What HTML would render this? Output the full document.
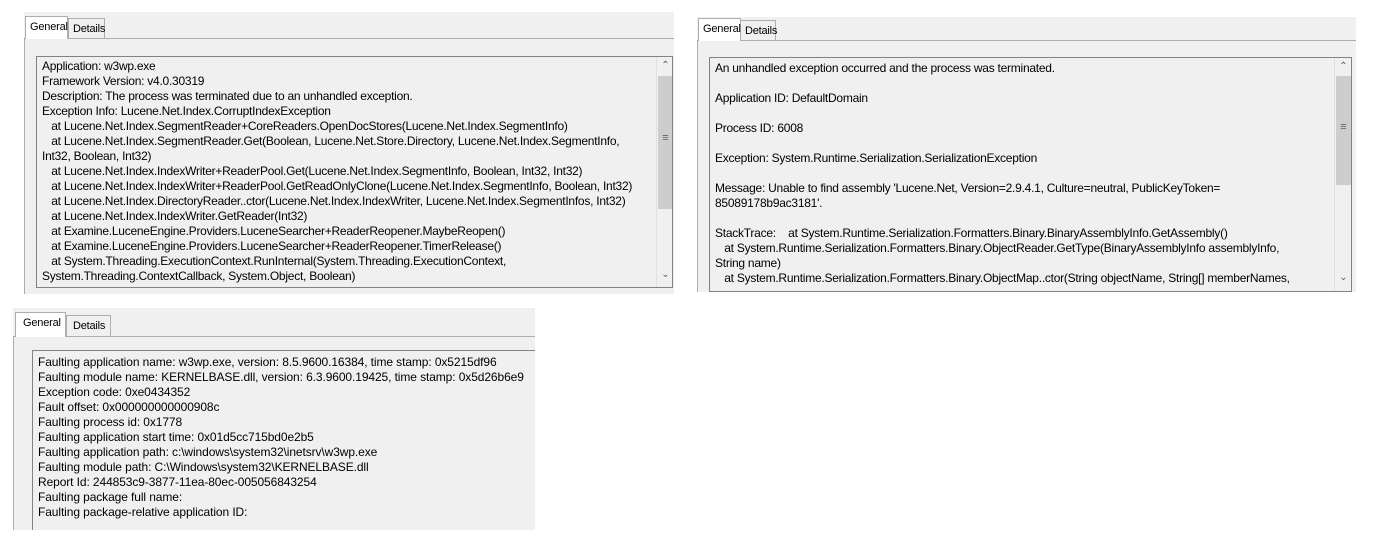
<!DOCTYPE html>
<html><head><meta charset="utf-8"><style>
body{margin:0;width:1391px;height:550px;background:#fff;position:relative;overflow:hidden;font-family:"Liberation Sans",sans-serif;color:#000}
.p{position:absolute;background:#f0f0f0;overflow:hidden}
.tab{position:absolute;font-size:11px;letter-spacing:-0.2px;border:1px solid #adadad;border-bottom:none;padding-left:4px;box-sizing:border-box;line-height:20px;white-space:nowrap}
.tg{background:#fff;z-index:2}
.td{background:#f0f0f0}
.ln{position:absolute;height:1px;background:#adadad}
.box{position:absolute;border:1px solid #828282;background:#f0f0f0;overflow:hidden;box-sizing:border-box}
.t{position:absolute;font-size:12px;line-height:15px;white-space:pre;letter-spacing:-0.25px}
.sb{position:absolute;background:#f0f0f0;border-left:1px solid #e0e0e0}
.th{position:absolute;background:#cdcdcd;left:1px;right:1px}
.ar{position:absolute;left:0;right:0;text-align:center;font-size:10px;color:#606060}
</style></head><body>

<!-- Panel 1 -->
<div class="p" style="left:24px;top:12px;width:650px;height:282px">
  <div class="ln" style="left:0;top:26px;width:650px"></div>
  <div class="ln" style="left:0;top:26px;width:1px;height:256px"></div>
  <div class="tab tg" style="left:1px;top:4px;width:43px;height:23px;line-height:20px">General</div>
  <div class="tab td" style="left:44px;top:6px;width:37px;height:20px">Details</div>
  <div class="box" style="left:12px;top:44px;width:637px;height:232px">
    <div class="t" style="left:5px;top:2px">Application: w3wp.exe
Framework Version: v4.0.30319
Description: The process was terminated due to an unhandled exception.
Exception Info: Lucene.Net.Index.CorruptIndexException
   at Lucene.Net.Index.SegmentReader+CoreReaders.OpenDocStores(Lucene.Net.Index.SegmentInfo)
   at Lucene.Net.Index.SegmentReader.Get(Boolean, Lucene.Net.Store.Directory, Lucene.Net.Index.SegmentInfo,
Int32, Boolean, Int32)
   at Lucene.Net.Index.IndexWriter+ReaderPool.Get(Lucene.Net.Index.SegmentInfo, Boolean, Int32, Int32)
   at Lucene.Net.Index.IndexWriter+ReaderPool.GetReadOnlyClone(Lucene.Net.Index.SegmentInfo, Boolean, Int32)
   at Lucene.Net.Index.DirectoryReader..ctor(Lucene.Net.Index.IndexWriter, Lucene.Net.Index.SegmentInfos, Int32)
   at Lucene.Net.Index.IndexWriter.GetReader(Int32)
   at Examine.LuceneEngine.Providers.LuceneSearcher+ReaderReopener.MaybeReopen()
   at Examine.LuceneEngine.Providers.LuceneSearcher+ReaderReopener.TimerRelease()
   at System.Threading.ExecutionContext.RunInternal(System.Threading.ExecutionContext,
System.Threading.ContextCallback, System.Object, Boolean)</div>
    <div class="sb" style="left:619px;top:0;width:17px;height:230px">
      <div class="ar" style="top:3px">&#8963;</div>
      <div class="th" style="top:19px;height:133px"></div>
      <div class="ar" style="top:75px;font-size:11px">&#8801;</div>
      <div class="ar" style="top:212px">&#8964;</div>
    </div>
  </div>
</div>

<!-- Panel 2 -->
<div class="p" style="left:697px;top:17px;width:659px;height:275px">
  <div class="ln" style="left:0;top:23px;width:659px"></div>
  <div class="ln" style="left:0;top:23px;width:1px;height:252px"></div>
  <div class="tab tg" style="left:1px;top:1px;width:43px;height:23px">General</div>
  <div class="tab td" style="left:43px;top:3px;width:36px;height:20px">Details</div>
  <div class="box" style="left:12px;top:40px;width:643px;height:235px">
    <div class="t" style="left:5px;top:3px">An unhandled exception occurred and the process was terminated.

Application ID: DefaultDomain

Process ID: 6008

Exception: System.Runtime.Serialization.SerializationException

Message: Unable to find assembly 'Lucene.Net, Version=2.9.4.1, Culture=neutral, PublicKeyToken=
85089178b9ac3181'.

StackTrace:    at System.Runtime.Serialization.Formatters.Binary.BinaryAssemblyInfo.GetAssembly()
   at System.Runtime.Serialization.Formatters.Binary.ObjectReader.GetType(BinaryAssemblyInfo assemblyInfo,
String name)
   at System.Runtime.Serialization.Formatters.Binary.ObjectMap..ctor(String objectName, String[] memberNames,</div>
    <div class="sb" style="left:624px;top:0;width:17px;height:233px">
      <div class="ar" style="top:3px">&#8963;</div>
      <div class="th" style="top:18px;height:109px"></div>
      <div class="ar" style="top:63px;font-size:11px">&#8801;</div>
      <div class="ar" style="top:214px">&#8964;</div>
    </div>
  </div>
</div>

<!-- Panel 3 -->
<div class="p" style="left:13px;top:308px;width:522px;height:222px">
  <div class="ln" style="left:0;top:28px;width:522px"></div>
  <div class="ln" style="left:0;top:28px;width:1px;height:194px"></div>
  <div class="tab tg" style="left:2px;top:4px;width:51px;height:25px;padding-left:7px">General</div>
  <div class="tab td" style="left:53px;top:7px;width:45px;height:21px;padding-left:6px">Details</div>
  <div class="box" style="left:19px;top:42px;width:510px;height:190px;border-right:none">
    <div class="t" style="left:5px;top:4px;letter-spacing:-0.1px">Faulting application name: w3wp.exe, version: 8.5.9600.16384, time stamp: 0x5215df96
Faulting module name: KERNELBASE.dll, version: 6.3.9600.19425, time stamp: 0x5d26b6e9
Exception code: 0xe0434352
Fault offset: 0x000000000000908c
Faulting process id: 0x1778
Faulting application start time: 0x01d5cc715bd0e2b5
Faulting application path: c:\windows\system32\inetsrv\w3wp.exe
Faulting module path: C:\Windows\system32\KERNELBASE.dll
Report Id: 244853c9-3877-11ea-80ec-005056843254
Faulting package full name: 
Faulting package-relative application ID: </div>
  </div>
</div>

</body></html>
